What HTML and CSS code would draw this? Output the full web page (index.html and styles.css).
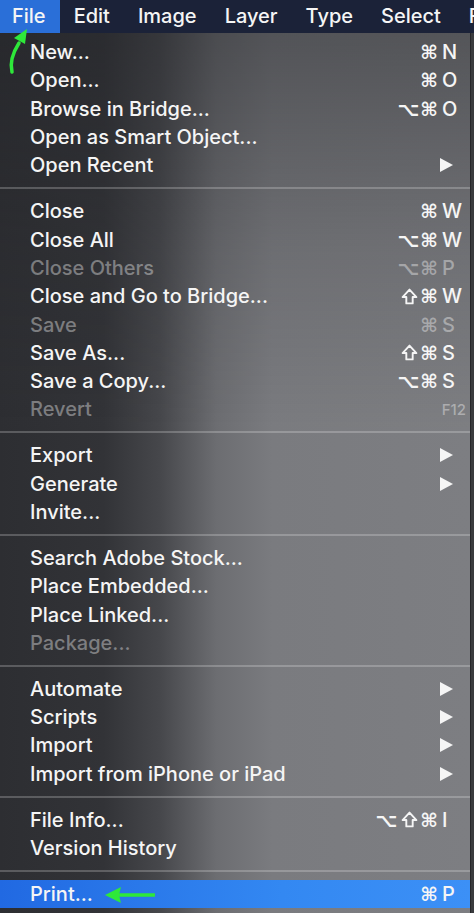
FILE: index.html
```html
<!DOCTYPE html>
<html lang="en">
<head>
    <meta charset="UTF-8">
    <title>File Menu</title>
    <link rel="stylesheet" href="styles.css">
</head>
<body>
    <div class="menubar">
        <span class="title active">File</span>
        <span class="title">Edit</span>
        <span class="title">Image</span>
        <span class="title">Layer</span>
        <span class="title">Type</span>
        <span class="title">Select</span>
        <span class="title">Filter</span>
    </div>
    <div class="menu">
        <div class="item"><span class="label">New...</span><span class="keys"><span class="mods">⌘</span><span class="key">N</span></span></div>
        <div class="item"><span class="label">Open...</span><span class="keys"><span class="mods">⌘</span><span class="key">O</span></span></div>
        <div class="item"><span class="label">Browse in Bridge...</span><span class="keys"><span class="mods">⌥⌘</span><span class="key">O</span></span></div>
        <div class="item"><span class="label">Open as Smart Object...</span></div>
        <div class="item"><span class="label">Open Recent</span><span class="keys"><span class="key"><span class="arrow"></span></span></span></div>
        <div class="sep"></div>
        <div class="item"><span class="label">Close</span><span class="keys"><span class="mods">⌘</span><span class="key">W</span></span></div>
        <div class="item"><span class="label">Close All</span><span class="keys"><span class="mods">⌥⌘</span><span class="key">W</span></span></div>
        <div class="item disabled"><span class="label">Close Others</span><span class="keys"><span class="mods">⌥⌘</span><span class="key">P</span></span></div>
        <div class="item"><span class="label">Close and Go to Bridge...</span><span class="keys"><svg class="shift" viewBox="0 0 16 16"><path d="M8 1.5 L14.5 8.5 H11 V14.5 H5 V8.5 H1.5 Z"/></svg><span class="mods">⌘</span><span class="key">W</span></span></div>
        <div class="item disabled"><span class="label">Save</span><span class="keys"><span class="mods">⌘</span><span class="key">S</span></span></div>
        <div class="item"><span class="label">Save As...</span><span class="keys"><svg class="shift" viewBox="0 0 16 16"><path d="M8 1.5 L14.5 8.5 H11 V14.5 H5 V8.5 H1.5 Z"/></svg><span class="mods">⌘</span><span class="key">S</span></span></div>
        <div class="item"><span class="label">Save a Copy...</span><span class="keys"><span class="mods">⌥⌘</span><span class="key">S</span></span></div>
        <div class="item disabled"><span class="label">Revert</span><span class="keys"><span class="fkey">F12</span></span></div>
        <div class="sep"></div>
        <div class="item"><span class="label">Export</span><span class="keys"><span class="key"><span class="arrow"></span></span></span></div>
        <div class="item"><span class="label">Generate</span><span class="keys"><span class="key"><span class="arrow"></span></span></span></div>
        <div class="item"><span class="label">Invite...</span></div>
        <div class="sep"></div>
        <div class="item"><span class="label">Search Adobe Stock...</span></div>
        <div class="item"><span class="label">Place Embedded...</span></div>
        <div class="item"><span class="label">Place Linked...</span></div>
        <div class="item disabled"><span class="label">Package...</span></div>
        <div class="sep"></div>
        <div class="item"><span class="label">Automate</span><span class="keys"><span class="key"><span class="arrow"></span></span></span></div>
        <div class="item"><span class="label">Scripts</span><span class="keys"><span class="key"><span class="arrow"></span></span></span></div>
        <div class="item"><span class="label">Import</span><span class="keys"><span class="key"><span class="arrow"></span></span></span></div>
        <div class="item"><span class="label">Import from iPhone or iPad</span><span class="keys"><span class="key"><span class="arrow"></span></span></span></div>
        <div class="sep"></div>
        <div class="item"><span class="label">File Info...</span><span class="keys"><span class="mods">⌥</span><svg class="shift" viewBox="0 0 16 16"><path d="M8 1.5 L14.5 8.5 H11 V14.5 H5 V8.5 H1.5 Z"/></svg><span class="mods">⌘</span><span class="key">I</span></span></div>
        <div class="item"><span class="label">Version History</span></div>
        <div class="sep"></div>
        <div class="item selected"><span class="label">Print...</span><span class="keys"><span class="mods">⌘</span><span class="key">P</span></span></div>
    </div>

    <svg class="pointer pointer-up" width="40" height="52" viewBox="0 0 40 52">
        <path d="M12 46 C10 38 12 28 19 17" fill="none" stroke="#2ee83a" stroke-width="3.5" stroke-linecap="round"/>
        <path d="M27 3 L14 12 L25 18 Z" fill="#2ee83a"/>
    </svg>
    <svg class="pointer pointer-left" width="60" height="20" viewBox="0 0 60 20">
        <path d="M14 10 L52 10" stroke="#2ee83a" stroke-width="3.5"/>
        <path d="M2 10 L18 2 L16 10 L18 18 Z" fill="#2ee83a"/>
    </svg>
</body>
</html>
```

FILE: styles.css
```css
body {
    margin: 0;
    width: 474px;
    height: 913px;
    overflow: hidden;
    position: relative;
    background-color: #3a3b3e;
    font-family: Inter, "Liberation Sans", sans-serif;
    color: #f5f5f5;
}
.menubar {
    display: flex;
    height: 33px;
    align-items: center;
    background-color: #1b2238;
    font-size: 20px;
    font-weight: 500;
    white-space: nowrap;
    overflow: hidden;
}
.title {
    height: 33px;
    line-height: 33px;
    padding: 0 14px;
}
.title.active {
    padding-left: 12px;
    padding-right: 14px;
    background-color: #2a6fd8;
}
.menu {
    width: 470px;
    padding-top: 5px;
    padding-bottom: 5px;
    border-right: 1px solid #26272a;
    background:
        linear-gradient(to bottom, rgba(34, 35, 39, 0.45) 0%, rgba(34, 35, 39, 0.15) 25%, rgba(34, 35, 39, 0) 45%),
        linear-gradient(to right, #2d2e32 0%, #323337 22%, #46474b 34%, #6c6d71 46%, #7a7b7f 58%, #7d7e82 100%);
}
.item {
    display: flex;
    align-items: center;
    height: 28.3px;
    padding: 0 8px 0 30px;
    font-size: 20px;
    font-weight: 500;
}
.label {
    flex: 1;
}
.keys {
    display: flex;
    align-items: center;
}
.mods {
    font-family: "DejaVu Sans", sans-serif;
    font-size: 19px;
    font-weight: bold;
    letter-spacing: 1px;
    margin-right: 3px;
}
.shift {
    width: 17px;
    height: 17px;
    margin-right: 2px;
    fill: none;
    stroke: currentColor;
    stroke-width: 1.8;
    stroke-linejoin: round;
}
.key {
    width: 20px;
    display: flex;
    align-items: center;
}
.fkey {
    font-size: 15px;
    margin-right: -4px;
}
.arrow {
    width: 0;
    height: 0;
    margin-left: -2px;
    border-left: 13px solid #f5f5f5;
    border-top: 7px solid transparent;
    border-bottom: 7px solid transparent;
}
.disabled {
    color: rgba(255, 255, 255, 0.38);
}
.sep {
    height: 17.7px;
    display: flex;
    align-items: center;
}
.sep::before {
    content: "";
    flex: 1;
    height: 2px;
    background-color: rgba(255, 255, 255, 0.22);
}
.selected {
    background: linear-gradient(to right, #2169e2, #3388f2 60%, #3c90f6);
}
.pointer {
    position: absolute;
}
.pointer-up {
    left: 0;
    top: 26px;
}
.pointer-left {
    left: 103px;
    top: 885px;
}
```
